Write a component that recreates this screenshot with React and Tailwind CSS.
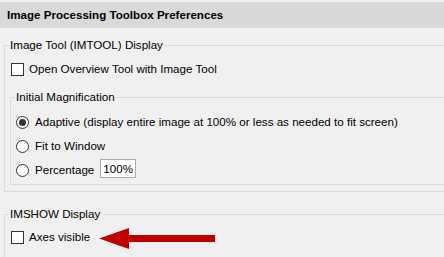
import React from 'react';

function CheckBox({ label }) {
    return (
        <div className="flex h-[16px] items-center">
            <span className="ml-[6px] h-[13px] w-[13px] shrink-0 border border-[#333333] bg-white" />
            <span className="ml-[5px] whitespace-nowrap">{label}</span>
        </div>
    );
}

function Radio({ label, checked, children }) {
    return (
        <div className="flex h-[16px] items-center">
            <span className="ml-[5px] flex h-[13px] w-[13px] shrink-0 items-center justify-center rounded-full border border-[#333333] bg-white">
                {checked && <span className="h-[7px] w-[7px] rounded-full bg-[#333333]" />}
            </span>
            <span className="ml-[6px] whitespace-nowrap">{label}</span>
            {children}
        </div>
    );
}

function Arrow() {
    return (
        <svg width="116" height="21" viewBox="0 0 116 21" className="ml-[9px] mt-[3px] shrink-0">
            <polygon points="0,10.5 30,0 30,7 116,7 116,14 30,14 30,21" fill="#c00000" />
        </svg>
    );
}

export default function App() {
    return (
        <div className="h-[257px] w-[444px] overflow-hidden bg-[#f0f0f0] text-[11.6px] leading-[16px] text-black" style={{ fontFamily: '"Liberation Sans", Arial, sans-serif' }}>
            <div className="mt-[2px] flex h-[26px] items-center bg-[#d9d9d9] pl-[7px] font-bold">
                Image Processing Toolbox Preferences
            </div>

            <fieldset className="ml-[4px] mt-[9px] w-[480px] border border-[#dcdcdc] pb-[6px]">
                <legend className="ml-[4px] px-[1px] leading-[16px]">Image Tool (IMTOOL) Display</legend>
                <div className="mt-[8px]">
                    <CheckBox label="Open Overview Tool with Image Tool" />
                </div>

                <fieldset className="ml-[5px] mt-[12px] w-[470px] border border-[#dcdcdc] pb-[6px]">
                    <legend className="ml-[4px] px-[1px] leading-[16px]">Initial Magnification</legend>
                    <div className="mt-[9px] flex flex-col gap-[8px]">
                        <Radio checked label="Adaptive (display entire image at 100% or less as needed to fit screen)" />
                        <Radio label="Fit to Window" />
                        <Radio label="Percentage">
                            <div className="ml-[6px] -mt-[3px] flex h-[19px] w-[36px] shrink-0 items-center border border-[#adadad] bg-white pl-[2px]">
                                100%
                            </div>
                        </Radio>
                    </div>
                </fieldset>
            </fieldset>

            <fieldset className="ml-[4px] mt-[14px] h-[80px] w-[480px] border border-[#dcdcdc]">
                <legend className="ml-[4px] px-[1px] leading-[16px]">IMSHOW Display</legend>
                <div className="mt-[7px] flex h-[16px] items-center">
                    <CheckBox label="Axes visible" />
                    <Arrow />
                </div>
            </fieldset>
        </div>
    );
}
